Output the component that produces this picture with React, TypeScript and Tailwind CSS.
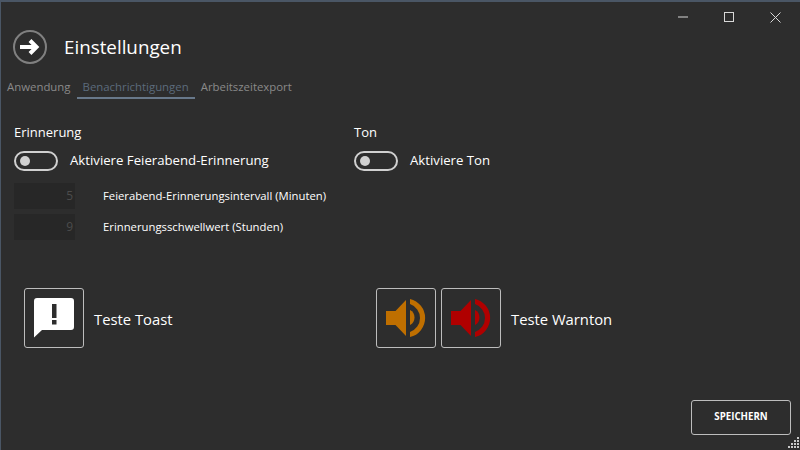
function Toggle() {
  return (
    <div className="flex h-[20px] w-[44px] items-center rounded-full border-2 border-[#d0d0d0] pl-[4px]">
      <div className="h-[10px] w-[10px] rounded-full bg-[#d0d0d0]" />
    </div>
  );
}

function NumberRow({ value, label }: { value: string; label: string }) {
  return (
    <div className="flex items-center">
      <div className="flex h-[26px] w-[61px] items-center justify-end bg-[#272727] pr-[2px] text-[12px] text-[#4c4c4c]">{value}</div>
      <span className="ml-[28px] text-[11.3px] text-white">{label}</span>
    </div>
  );
}

function Speaker({ color }: { color: string }) {
  return (
    <button className="flex h-[60px] w-[60px] items-center justify-center rounded-[3px] border border-[#bdbdbd]">
      <svg width="42" height="40" viewBox="0 0 42 40">
        <path d="M1 13h9.500L21 2v36L10.500 27H1z" fill={color} />
        <path d="M25 12a8.500 8.500 0 0 1 0 15z" fill={color} />
        <path d="M25 1a19.500 19.500 0 0 1 0 38v-5a14.800 14.800 0 0 0 0-28z" fill={color} />
      </svg>
    </button>
  );
}

export default function App() {
  return (
    <div className="flex h-[450px] w-[800px] flex-col overflow-hidden border-t-2 border-l border-[#4a5665] bg-[#2d2d2d] font-['Open_Sans',sans-serif] text-white">
      <div className="flex h-[28px] items-center justify-end pt-[2px]">
        <svg width="10" height="2" viewBox="0 0 10 2" className="mr-[36px]">
          <rect width="10" height="1" y="0.5" fill="#d8d8d8" />
        </svg>
        <div className="mr-[36px] h-[10px] w-[10px] border border-[#d8d8d8]" />
        <svg width="11" height="11" viewBox="0 0 11 11" className="mr-[19px]">
          <path d="M.5.5l10 10M10.500.5l-10 10" stroke="#d8d8d8" fill="none" />
        </svg>
      </div>

      <div className="ml-[12px] flex items-center">
        <div className="flex h-[34px] w-[34px] items-center justify-center rounded-full border-2 border-[#808080]">
          <svg width="20" height="16" viewBox="0 0 20 16">
            <path d="M0 8h16" stroke="#fff" strokeWidth="4" fill="none" />
            <path d="M10 1.500L16.500 8 10 14.500" stroke="#fff" strokeWidth="4" fill="none" />
          </svg>
        </div>
        <h1 className="ml-[17px] text-[18.8px] leading-[34px]">Einstellungen</h1>
      </div>

      <div className="ml-[6px] mt-[13px] flex text-[11.4px] leading-[20px] text-[#8a8a8a]">
        <span>Anwendung</span>
        <span className="ml-[6px] border-b-2 border-[#68788a] px-[6px] text-[#5c6b7c]">Benachrichtigungen</span>
        <span className="ml-[6px]">Arbeitszeitexport</span>
      </div>

      <div className="ml-[13px] mt-[24px] flex">
        <div className="w-[340px]">
          <div className="text-[13px] leading-[18px]">Erinnerung</div>
          <div className="mt-[10px] flex items-center">
            <Toggle />
            <span className="ml-[12px] text-[13.2px]">Aktiviere Feierabend-Erinnerung</span>
          </div>
          <div className="mt-[12px] flex flex-col gap-[5px]">
            <NumberRow value="5" label="Feierabend-Erinnerungsintervall (Minuten)" />
            <NumberRow value="9" label="Erinnerungsschwellwert (Stunden)" />
          </div>
        </div>
        <div>
          <div className="text-[13px] leading-[18px]">Ton</div>
          <div className="mt-[10px] flex items-center">
            <Toggle />
            <span className="ml-[12px] text-[13.2px]">Aktiviere Ton</span>
          </div>
        </div>
      </div>

      <div className="ml-[23px] mt-[48px] flex items-center">
        <button className="flex h-[60px] w-[60px] items-center justify-center rounded-[3px] border border-[#bdbdbd]">
          <svg width="40" height="40" viewBox="0 0 40 40">
            <path d="M3 0h34a3 3 0 0 1 3 3v26a3 3 0 0 1-3 3H8L0 39.500V3a3 3 0 0 1 3-3z" fill="#fff" />
            <rect x="18" y="6" width="4.500" height="14" fill="#2d2d2d" />
            <rect x="18" y="22" width="4.500" height="4.500" fill="#2d2d2d" />
          </svg>
        </button>
        <span className="ml-[10px] w-[282px] pt-[2px] text-[14.8px]">Teste Toast</span>
        <div className="flex gap-[5px]">
          <Speaker color="#bf6f00" />
          <Speaker color="#b00000" />
        </div>
        <span className="ml-[10px] pt-[2px] text-[14.8px]">Teste Warnton</span>
      </div>

      <div className="mr-[9px] mt-[52px] flex justify-end">
        <button className="h-[35px] w-[100px] rounded-[3px] border border-[#bdbdbd] text-[9.7px] font-bold">SPEICHERN</button>
      </div>

      <div className="mr-[1px] mt-[2px] flex justify-end">
        <svg width="11" height="11" viewBox="0 0 11 11" className="fill-[#c8c8c8]">
          <rect x="9" y="0" width="2" height="2" />
          <rect x="6" y="3" width="2" height="2" />
          <rect x="9" y="3" width="2" height="2" />
          <rect x="3" y="6" width="2" height="2" />
          <rect x="6" y="6" width="2" height="2" />
          <rect x="9" y="6" width="2" height="2" />
          <rect x="0" y="9" width="2" height="2" />
          <rect x="3" y="9" width="2" height="2" />
          <rect x="6" y="9" width="2" height="2" />
          <rect x="9" y="9" width="2" height="2" />
        </svg>
      </div>
    </div>
  );
}
